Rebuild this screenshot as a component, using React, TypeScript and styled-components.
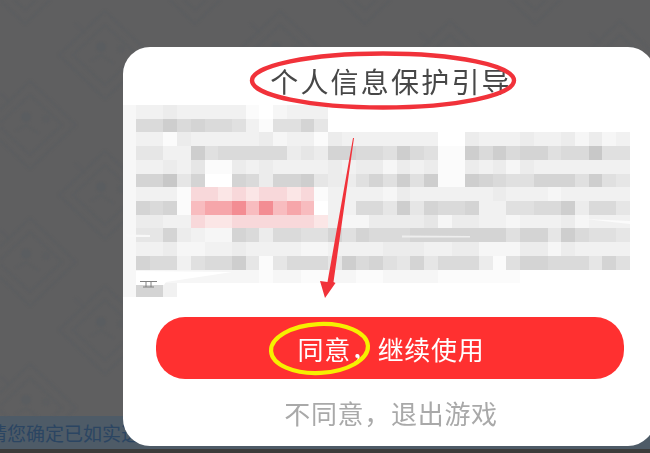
import React from "react";
import styled, { createGlobalStyle } from "styled-components";

const SHADES: Record<string, string> = {
  "0": "#ffffff",
  "1": "#fbfbfb",
  "2": "#f6f6f6",
  "3": "#f1f1f1",
  "4": "#ececec",
  "5": "#e6e6e6",
  "6": "#e0e0e0",
  "7": "#dadada",
  "8": "#d4d4d4",
  "9": "#cecece",
  a: "#c8c8c8",
  p: "#fbe6e6",
  q: "#f8d8da",
  r: "#f8bcbf",
  s: "#f6a6aa",
  t: "#f38d93",
};

const MOSAIC = [
  "33433333102333" + "0000000000000000000000",
  "77978776316685" + "0000000000000000000000",
  "33143333342331" + "4333" + "3333" + "00" + "433343342423",
  "55339677777454" + "8877" + "6976" + "11" + "979788677a66",
  "33435114343333" + "4344" + "2434" + "11" + "434243333333",
  "88a58008748895" + "4468" + "6969" + "11" + "987668886965",
  "3331" + "qqpqpqqpq" + "1" + "3333" + "2433" + "33334333233333",
  "8781" + "rsstrtrsr" + "0" + "3377" + "5958" + "77833667794775",
  "4433" + "qppqqqqqq" + "p" + "3224" + "4445" + "24433233342333",
  "558432287477668687" + "778888888688597665",
  "334223343333223333" + "444334422244243333",
  "877367795157775978" + "658577741688777586",
  "222222222122112211" + "222211111100000000",
  "883" + "000000000000000000000000000000000",
];

const WATERMARKS = [
  [25, -20], [195, -20], [365, -20], [535, -20],
  [105, 55], [280, 55], [450, 65], [620, 65],
  [30, 125], [105, 195], [30, 262], [105, 330], [30, 408],
];

const GlobalStyle = createGlobalStyle`
  html, body {
    margin: 0;
    padding: 0;
    background: #5f5f5f;
  }
`;

const Page = styled.div`
  position: relative;
  width: 650px;
  height: 453px;
  overflow: hidden;
  display: flex;
  flex-direction: column;
  font-family: "Noto Sans CJK SC", "Noto Sans", sans-serif;
`;

const Backdrop = styled.div`
  flex: 1 1 auto;
  background: #5f5f60;
`;

const WatermarkLayer = styled.svg`
  display: block;
  width: 100%;
  height: 100%;
  filter: blur(1px);
`;

const NoticeStrip = styled.div`
  flex: 0 0 33px;
  overflow: hidden;
  white-space: nowrap;
  background: #4e5b67;
  color: #2b4562;
  font-size: 19px;
  line-height: 33px;
  text-indent: -12px;
`;

const BottomEdge = styled.div`
  flex: 0 0 4px;
  background: #3c3b3a;
`;

const Dialog = styled.div`
  position: absolute;
  top: 47px;
  left: 123px;
  width: 532px;
  height: 399px;
  background: #ffffff;
  border-radius: 27px;
  overflow: hidden;
  display: flex;
  flex-direction: column;
`;

const Title = styled.h1`
  flex: 0 0 58px;
  box-sizing: border-box;
  margin: 0;
  padding: 10px 0 0 4px;
  text-align: center;
  color: #474747;
  font-size: 28px;
  font-weight: 400;
  line-height: 48px;
  letter-spacing: 2.2px;
  filter: blur(0.3px);
`;

const BlurredText = styled.div`
  flex: 0 0 192px;
  width: 507px;
  box-sizing: border-box;
  border-left: 13px solid #f7f7f7;
  display: grid;
  grid-template-columns: repeat(36, 13.72px);
  grid-auto-rows: 13.72px;
  filter: blur(0.6px);
`;

const Cell = styled.div<{ $shade: string }>`
  background: ${({ $shade }) => SHADES[$shade]};
`;

const AgreeButton = styled.button`
  flex: 0 0 62px;
  margin: 20px 31px 0 33px;
  border: none;
  border-radius: 29px;
  background: #ff3030;
  color: #ffffff;
  font-family: inherit;
  font-size: 26px;
  letter-spacing: 0.7px;
  padding: 0 0 0 2px;
  filter: blur(0.2px);
`;

const RefuseLink = styled.div`
  flex: 1 1 auto;
  display: flex;
  align-items: center;
  justify-content: center;
  color: #a9a9a9;
  font-size: 26px;
  letter-spacing: 0.7px;
  padding-left: 4px;
  filter: blur(0.2px);
`;

const Annotations = styled.svg`
  position: absolute;
  top: 0;
  left: 0;
  width: 650px;
  height: 453px;
  pointer-events: none;
`;

const Watermark = ({ x, y }: { x: number; y: number }) => (
  <g transform={`translate(${x} ${y})`} fill="none" stroke="#5a5d60" strokeWidth="1.4">
    <path d="M0 -44 L46 0 L0 44 L-46 0 Z" />
    <path d="M0 -30 L32 0 L0 30 L-32 0 Z" />
    <circle cx="-4" cy="-8" r="5" fill="#5a5d60" stroke="none" />
    <path d="M-14 6 L-4 0 L8 8 M-20 -22 L-30 -32" />
    <circle cx="16" cy="-6" r="2.5" />
  </g>
);

const App = () => (
  <Page>
    <GlobalStyle />
    <Backdrop>
      <WatermarkLayer viewBox="0 0 650 416">
        {WATERMARKS.map(([x, y]) => (
          <Watermark key={`${x}-${y}`} x={x} y={y} />
        ))}
      </WatermarkLayer>
    </Backdrop>
    <NoticeStrip>请您确定已如实透</NoticeStrip>
    <BottomEdge />
    <Dialog>
      <Title>个人信息保护引导</Title>
      <BlurredText>
        {MOSAIC.flatMap((row, r) =>
          row.split("").map((shade, c) => <Cell key={`${r}-${c}`} $shade={shade} />)
        )}
      </BlurredText>
      <AgreeButton>同意，继续使用</AgreeButton>
      <RefuseLink>不同意，退出游戏</RefuseLink>
    </Dialog>
    <Annotations viewBox="0 0 650 453">
      <path d="M136 271 L232 272 L166 282 L164 285 L136 285 Z" fill="#ffffff" />
      <path d="M585 219 L630 221 L630 224 Z" fill="#fbfbfb" />
      <path d="M126 234.5 L150 235 L150 237 L127 237 Z" fill="#f8f8f8" />
      <path d="M402 235.5 L470 236 L470 237.5 L402 237.5 Z" fill="#eeeeee" />
      <path d="M140 281.5 H157 M143 287 H154 M146 281.5 V287 M151 281.5 V287" stroke="#808080" strokeWidth="1" fill="none" />
      <ellipse cx="383" cy="80.5" rx="131" ry="27" fill="none" stroke="#f1323a" strokeWidth="4.4" />
      <path d="M353 138 L354 138 L333.5 282 L335.5 283 L325 298 L320 281 L327.5 282 Z" fill="#f1323a" />
      <ellipse cx="319.5" cy="348.5" rx="48.5" ry="24.5" fill="none" stroke="#f6f000" strokeWidth="4.2" transform="rotate(-3 319.5 348.5)" />
    </Annotations>
  </Page>
);

export default App;
